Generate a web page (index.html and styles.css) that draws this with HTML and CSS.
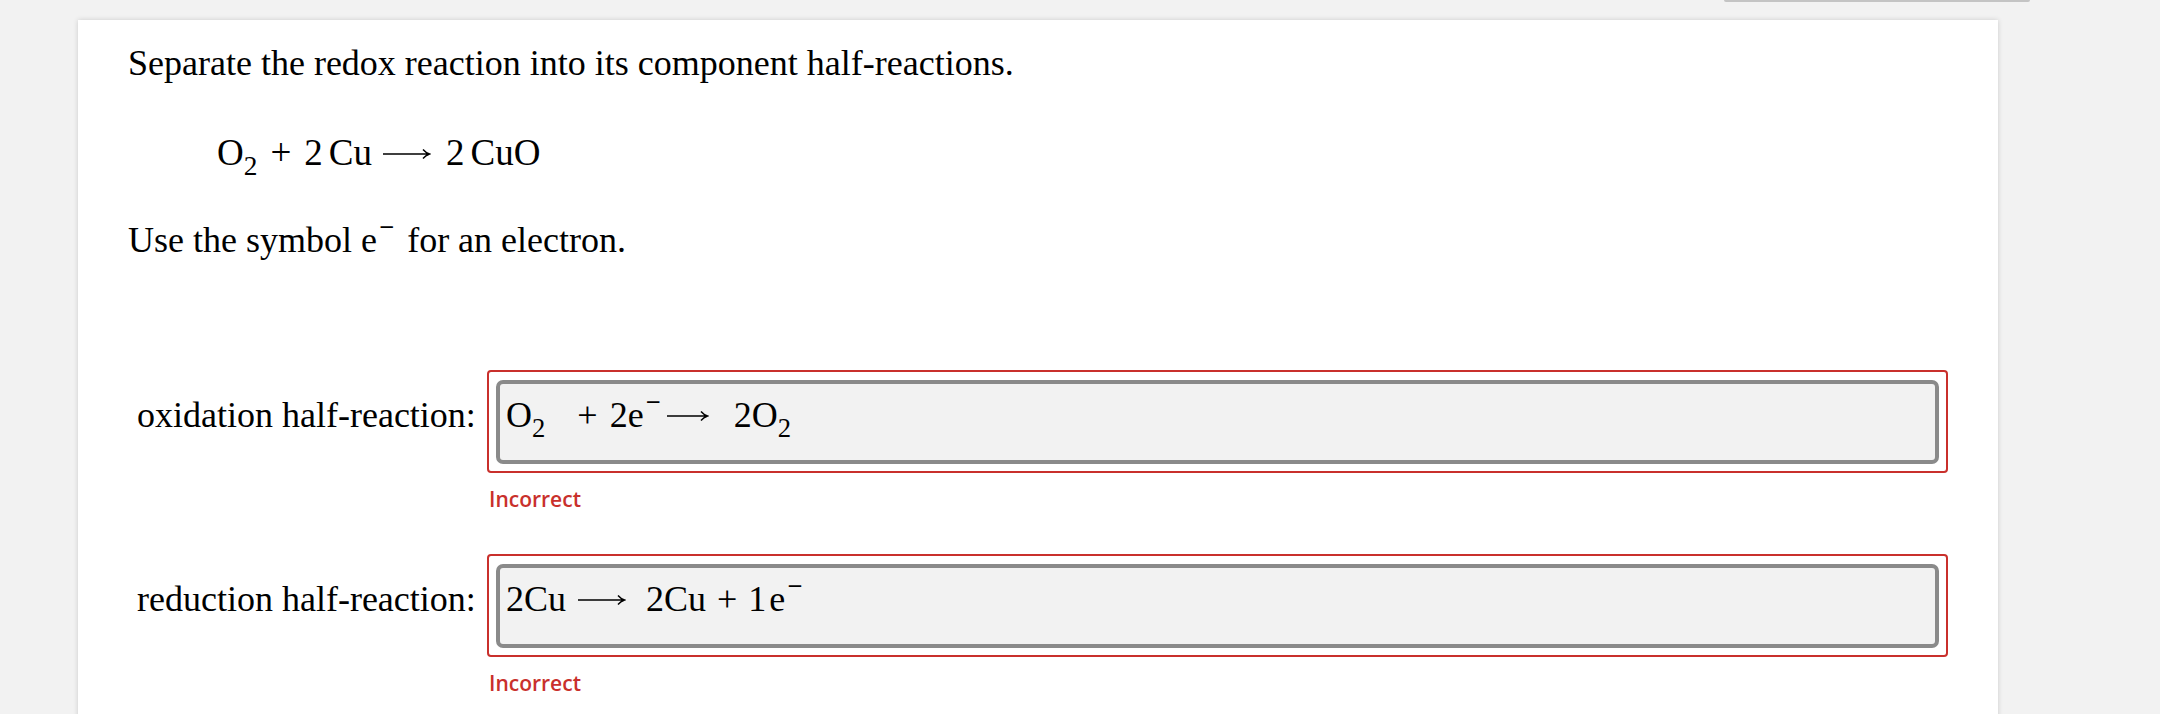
FILE: index.html
```html
<!DOCTYPE html>
<html lang="en">
<head>
    <meta charset="UTF-8">
    <title>Redox half-reactions</title>
    <link rel="stylesheet" href="styles.css">
</head>
<body>

    <div class="top-strip">
        <div class="tab"></div>
    </div>

    <div class="card">
        <p class="prompt">Separate the redox reaction into its component half-reactions.</p>

        <p class="equation">
            O<sub>2</sub><span class="op op-wide">+</span>2<span class="thin"></span>Cu<span class="arrow"><svg width="48" height="14" viewBox="0 0 48 14"><path d="M0 7H46M40 2.5Q42.5 5.5 46.5 7Q42.5 8.5 40 11.5" fill="none" stroke="#000" stroke-width="1.4"/></svg></span>2<span class="thin"></span>CuO
        </p>

        <p class="prompt">Use the symbol e<sup>−</sup> for an electron.</p>

        <div class="question">
            <label class="q-label">oxidation half-reaction:</label>
            <div class="answer incorrect">
                <div class="field">
                    O<sub>2</sub><span class="op op-left">+</span>2e<sup>−</sup><span class="arrow tight"><svg width="42" height="14" viewBox="0 0 42 14"><path d="M0 7H40M34 2.5Q36.5 5.5 40.5 7Q36.5 8.5 34 11.5" fill="none" stroke="#000" stroke-width="1.4"/></svg></span>2O<sub>2</sub>
                </div>
            </div>
            <div class="feedback">Incorrect</div>
        </div>

        <div class="question">
            <label class="q-label">reduction half-reaction:</label>
            <div class="answer incorrect">
                <div class="field">
                    2Cu<span class="arrow"><svg width="48" height="14" viewBox="0 0 48 14"><path d="M0 7H46M40 2.5Q42.5 5.5 46.5 7Q42.5 8.5 40 11.5" fill="none" stroke="#000" stroke-width="1.4"/></svg></span>2Cu<span class="op">+</span>1<span class="hair"></span>e<sup>−</sup>
                </div>
            </div>
            <div class="feedback">Incorrect</div>
        </div>
    </div>

</body>
</html>
```

FILE: styles.css
```css
body {
    margin: 0;
    background: #f2f2f2;
    font-family: "Liberation Serif", "Times New Roman", serif;
    color: #000;
}

/* bit of the toolbar poking in at the top */
.top-strip {
    display: flex;
    height: 2px;
    padding-left: 1724px;
}

.tab {
    width: 306px;
    background: #c4c4c4;
    border-radius: 0 0 3px 3px;
}

.card {
    background: #fff;
    width: 1920px;
    margin: 18px 0 0 78px;
    padding: 22px 50px 40px;
    box-sizing: border-box;
    box-shadow: 0 0 5px rgba(0, 0, 0, 0.16);
}

.prompt {
    font-size: 36px;
    line-height: 43px;
    margin: 0;
}

.equation {
    font-size: 37px;
    line-height: 43px;
    margin: 46px 0 45px 89px;
}

sub, sup {
    font-size: 0.74em;
    line-height: 0;
}

sub {
    vertical-align: -0.38em;
}

sup {
    font-weight: 700;
    vertical-align: 0.6em;
    margin-left: 2px;
    margin-right: 4px;
}

.op {
    margin: 0 11px;
}

.op-wide {
    margin: 0 13px;
}

.op-left {
    margin: 0 12px 0 32px;
}

.thin {
    display: inline-block;
    width: 6px;
}

.hair {
    display: inline-block;
    width: 3px;
}

.arrow {
    display: inline-block;
    vertical-align: 0.14em;
    margin: 0 20px 0 12px;
}

.equation .arrow {
    margin: 0 15px 0 11px;
}

.arrow.tight {
    margin: 0 25px 0 2px;
}

.arrow svg {
    display: block;
    position: relative;
    top: 1px;
}

/* answer rows */
.question {
    display: grid;
    grid-template-columns: 348px 1fr;
    column-gap: 11px;
    align-items: baseline;
    margin-top: 108px;
}

.question + .question {
    margin-top: 43px;
}

.q-label {
    font-size: 36px;
    padding-left: 9px;
    white-space: nowrap;
}

.answer {
    border: 2px solid #c9302c;
    border-radius: 4px;
    padding: 8px 7px 7px 7px;
}

.field {
    height: 84px;
    box-sizing: border-box;
    border: 4px solid #8a8a8a;
    border-radius: 7px;
    background: #f2f2f2;
    padding: 10px 6px 0;
    font-size: 36px;
    line-height: 43px;
    white-space: nowrap;
}

.feedback {
    grid-column: 2;
    font-family: "Open Sans", "Liberation Sans", sans-serif;
    font-weight: 600;
    font-size: 21px;
    line-height: 24px;
    color: #c9302c;
    margin-top: 14px;
    padding-left: 2px;
}
```
